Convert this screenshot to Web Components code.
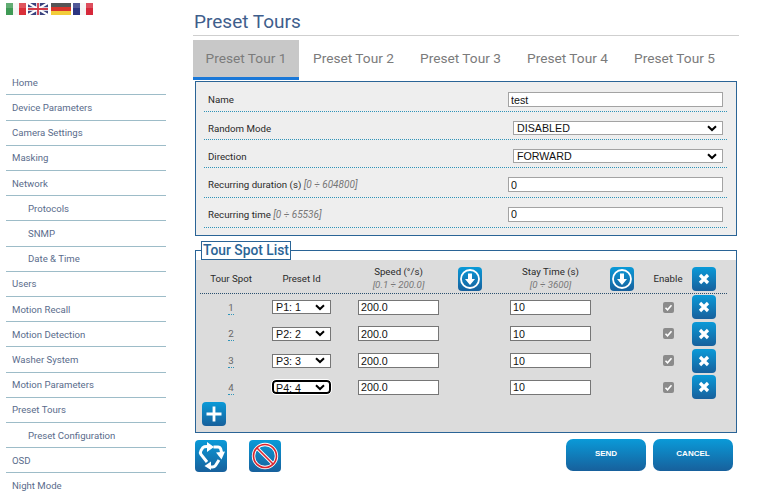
<!DOCTYPE html>
<html lang="en">
<head>
<meta charset="utf-8">
<title>Preset Tours</title>
<style>
  html, body { margin: 0; padding: 0; background: #fff; }
  body { font-family: Roboto, "Liberation Sans", sans-serif; overflow: hidden; }
  .page { display: flex; width: 758px; height: 496px; overflow: hidden; }
</style>
</head>
<body>
<div class="page">
  <side-bar>
    <nav-item>Home</nav-item>
    <nav-item>Device Parameters</nav-item>
    <nav-item>Camera Settings</nav-item>
    <nav-item>Masking</nav-item>
    <nav-item>Network</nav-item>
    <nav-item sub>Protocols</nav-item>
    <nav-item sub>SNMP</nav-item>
    <nav-item sub>Date &amp; Time</nav-item>
    <nav-item>Users</nav-item>
    <nav-item>Motion Recall</nav-item>
    <nav-item>Motion Detection</nav-item>
    <nav-item>Washer System</nav-item>
    <nav-item>Motion Parameters</nav-item>
    <nav-item>Preset Tours</nav-item>
    <nav-item sub>Preset Configuration</nav-item>
    <nav-item>OSD</nav-item>
    <nav-item last>Night Mode</nav-item>
  </side-bar>
  <main-area heading="Preset Tours">
    <tab-bar>
      <tab-item active>Preset Tour 1</tab-item>
      <tab-item>Preset Tour 2</tab-item>
      <tab-item>Preset Tour 3</tab-item>
      <tab-item>Preset Tour 4</tab-item>
      <tab-item>Preset Tour 5</tab-item>
    </tab-bar>
    <form-panel>
      <form-row h="30" pad="6" label="Name"><text-box value="test" w="215"></text-box></form-row>
      <form-row h="28" pad="5" label="Random Mode"><pick-box w="210" options="DISABLED,ENABLED"></pick-box></form-row>
      <form-row h="28" pad="5" label="Direction"><pick-box w="210" options="FORWARD,BACKWARD"></pick-box></form-row>
      <form-row h="30" pad="4" label="Recurring duration (s)" hint="[0 ÷ 604800]"><text-box value="0" w="215"></text-box></form-row>
      <form-row h="30" pad="3" label="Recurring time" hint="[0 ÷ 65536]"><text-box value="0" w="215"></text-box></form-row>
    </form-panel>
    <tour-table>
      <tour-row num="1" preset="P1: 1"></tour-row>
      <tour-row num="2" preset="P2: 2"></tour-row>
      <tour-row num="3" preset="P3: 3"></tour-row>
      <tour-row num="4" preset="P4: 4" focused></tour-row>
    </tour-table>
    <action-bar></action-bar>
  </main-area>
</div>

<script>
const ICONS = {
  down: `<circle cx="12" cy="12" r="9" fill="none" stroke="#fff" stroke-width="1.8"/>
         <path d="M10 6.5h4v5.5h3l-5 6-5-6h3z" fill="#fff"/>`,
  close: `<path d="M8 8l8 8M16 8l-8 8" stroke="#fff" stroke-width="3.2" fill="none"/>`,
  plus: `<path d="M12 4.5v15M4.5 12h15" stroke="#fff" stroke-width="2.8" fill="none"/>`,
  cycle: `<g fill="none" stroke="#fff" stroke-width="3">
            <path d="M12 22L6 14.5Q4.8 12.5 6 10.5L8 7.5Q9 6.5 12 6.5"/>
            <path d="M18.5 7H23Q25 7 25.7 9L26.6 12.5"/>
            <path d="M24 20L20.5 25.5Q19.5 27 17.5 27H15"/>
          </g>
          <path d="M12 2l7 5-7 5zM21 12.5l9-1-3.5 8zM16 21.5l-6.5 4.5 6.5 4z" fill="#fff"/>`,
  forbid: `<circle cx="16" cy="16" r="11.5" fill="none" stroke="#fff" stroke-width="3.4"/>
           <path d="M8 8l16 16" stroke="#fff" stroke-width="3.4"/>
           <circle cx="16" cy="16" r="11.5" fill="none" stroke="#d8252f" stroke-width="1.6"/>
           <path d="M8 8l16 16" stroke="#d8252f" stroke-width="1.6"/>`
};

const CHEVRON = "url(\"data:image/svg+xml,%3Csvg xmlns='http://www.w3.org/2000/svg' width='10' height='7'%3E%3Cpath d='M1 1.2l4 3.8 4-3.8' fill='none' stroke='%23000' stroke-width='2'/%3E%3C/svg%3E\")";
const TICK = "url(\"data:image/svg+xml,%3Csvg xmlns='http://www.w3.org/2000/svg' width='11' height='11'%3E%3Cpath d='M2.5 5.8l2 2 4-4.6' fill='none' stroke='%23fff' stroke-width='1.6'/%3E%3C/svg%3E\")";

class SideBar extends HTMLElement {
  constructor() {
    super();
    this.attachShadow({ mode: 'open' });
  }
  connectedCallback() {
    this.shadowRoot.innerHTML = `
      <style>
        :host { display: block; width: 193px; flex: none; padding-left: 6px; box-sizing: border-box; }
        .flags { display: flex; gap: 2px; height: 12px; margin-top: 3px; }
        .flags svg { width: 20px; height: 12px; display: block; }
        nav { margin-top: 55.3px; width: 160px; }
      </style>
      <div class="flags">
        <svg viewBox="0 0 20 12" role="img" aria-label="Italiano"><rect width="7" height="12" fill="#3f9a55"/><rect x="7" width="6" height="12" fill="#f4f4f4"/><rect x="13" width="7" height="12" fill="#d9303a"/><rect width="20" height="5" fill="#fff" opacity=".18"/></svg>
        <svg viewBox="0 0 20 12" role="img" aria-label="English"><rect width="20" height="12" fill="#39427e"/><path d="M0 0l20 12M20 0L0 12" stroke="#fff" stroke-width="2.2"/><path d="M10 0v12M0 6h20" stroke="#fff" stroke-width="3.6"/><path d="M10 0v12M0 6h20" stroke="#d23a48" stroke-width="1.8"/></svg>
        <svg viewBox="0 0 20 12" role="img" aria-label="Deutsch" style="margin-left:1px"><rect width="20" height="4" fill="#555"/><rect y="4" width="20" height="4" fill="#d8352c"/><rect y="8" width="20" height="4" fill="#f2cd3a"/></svg>
        <svg viewBox="0 0 20 12" role="img" aria-label="Français"><rect width="7" height="12" fill="#2c3580"/><rect x="7" width="6" height="12" fill="#f4f4f4"/><rect x="13" width="7" height="12" fill="#d6283a"/><rect width="20" height="5" fill="#fff" opacity=".18"/></svg>
      </div>
      <nav><slot></slot></nav>`;
  }
}
customElements.define('side-bar', SideBar);

class NavItem extends HTMLElement {
  constructor() {
    super();
    this.attachShadow({ mode: 'open' });
    this.shadowRoot.innerHTML = `
      <style>
        :host { display: flex; align-items: center; box-sizing: border-box; height: 25.19px; padding-left: 6px;
                border-bottom: 1px solid #9dbcc8; font-size: 9.6px; color: #5a6c8c; white-space: nowrap; }
        :host([sub]) { padding-left: 22px; }
        :host([last]) { border-bottom: 0; }
      </style>
      <slot></slot>`;
  }
}
customElements.define('nav-item', NavItem);

class MainArea extends HTMLElement {
  constructor() {
    super();
    this.attachShadow({ mode: 'open' });
  }
  connectedCallback() {
    this.shadowRoot.innerHTML = `
      <style>
        :host { display: block; width: 546px; flex: none; }
        h1 { margin: 0; height: 36px; box-sizing: border-box; border-bottom: 1px solid #cfcfcf; padding: 10px 0 0 1px;
             font-size: 19px; font-weight: 400; line-height: 24px; color: #3f5e8c; }
      </style>
      <h1>${this.getAttribute('heading')}</h1>
      <slot></slot>`;
  }
}
customElements.define('main-area', MainArea);

class TabBar extends HTMLElement {
  constructor() {
    super();
    this.attachShadow({ mode: 'open' });
    this.shadowRoot.innerHTML = `
      <style>
        :host { display: flex; margin-top: 4px; height: 40px; }
      </style>
      <slot></slot>`;
  }
}
customElements.define('tab-bar', TabBar);

class TabItem extends HTMLElement {
  constructor() {
    super();
    this.attachShadow({ mode: 'open' });
    this.shadowRoot.innerHTML = `
      <style>
        :host { display: flex; align-items: center; justify-content: center; box-sizing: border-box; width: 107px;
                height: 40px; padding-bottom: 5px; font-size: 13.7px; color: #7b7b7b; white-space: nowrap; }
        :host([active]) { width: 106px; margin-right: 1px; background: #c8c8c8; border-bottom: 3px solid #1a78d8; padding-bottom: 2px; }
      </style>
      <slot></slot>`;
  }
}
customElements.define('tab-item', TabItem);

class FormPanel extends HTMLElement {
  constructor() {
    super();
    this.attachShadow({ mode: 'open' });
    this.shadowRoot.innerHTML = `
      <style>
        :host { display: block; margin: 1px 2px 0; box-sizing: border-box; height: 155px; padding: 0 9px 0 8px;
                background: #eeeeee; border: 1px solid #2a6496; }
      </style>
      <slot></slot>`;
  }
}
customElements.define('form-panel', FormPanel);

class FormRow extends HTMLElement {
  constructor() {
    super();
    this.attachShadow({ mode: 'open' });
  }
  connectedCallback() {
    const hint = this.getAttribute('hint');
    this.shadowRoot.innerHTML = `
      <style>
        :host { display: flex; align-items: center; justify-content: space-between; box-sizing: border-box;
                height: ${this.getAttribute('h')}px; padding: ${this.getAttribute('pad')}px 4px 0 4px; border-bottom: 1px dotted #2f93b8;
                font-size: 9.7px; color: #2a2a2a; }
        i { color: #777; font-size: 10px; }
      </style>
      <span>${this.getAttribute('label')}${hint ? ` <i>${hint}</i>` : ''}</span>
      <slot></slot>`;
  }
}
customElements.define('form-row', FormRow);

class TextBox extends HTMLElement {
  constructor() {
    super();
    this.attachShadow({ mode: 'open' });
  }
  connectedCallback() {
    const w = this.getAttribute('w');
    this.shadowRoot.innerHTML = `
      <style>
        :host { display: block; }
        input { display: block; box-sizing: border-box; width: ${w}px; height: 15px; margin: 0; padding: 0 1px 0 2px;
                border: 1px solid var(--field-line, #a3a3a3); background: #fff; color: #111; outline: 0;
                font: 10.7px "Liberation Sans", sans-serif; }
      </style>
      <input type="text" value="${this.getAttribute('value')}">`;
  }
}
customElements.define('text-box', TextBox);

class PickBox extends HTMLElement {
  constructor() {
    super();
    this.attachShadow({ mode: 'open' });
  }
  connectedCallback() {
    const w = this.getAttribute('w');
    const opts = this.getAttribute('options').split(',');
    const focused = this.hasAttribute('focused');
    this.shadowRoot.innerHTML = `
      <style>
        :host { display: block; }
        select { display: block; box-sizing: border-box; width: ${w}px; height: 14px; margin: 0; padding: 0 0 0 3px;
                 border: 1px solid var(--field-line, #a3a3a3); border-radius: 0; background: #fff ${CHEVRON} no-repeat right 5px center;
                 appearance: none; color: #111; font: 10.7px/12px "Liberation Sans", sans-serif; outline: 0; }
        select.on { border: 2px solid #000; border-radius: 4px; outline: 1px solid #fff; padding-left: 2px; background-position: right 4px center; }
      </style>
      <select class="${focused ? 'on' : ''}">${opts.map(o => `<option>${o}</option>`).join('')}</select>`;
  }
}
customElements.define('pick-box', PickBox);

class IconBtn extends HTMLElement {
  constructor() {
    super();
    this.attachShadow({ mode: 'open' });
  }
  connectedCallback() {
    const size = this.getAttribute('size') || 24;
    this.shadowRoot.innerHTML = `
      <style>
        :host { display: block; width: ${size}px; height: ${size}px; }
        button { display: block; width: 100%; height: 100%; margin: 0; padding: 0; border: 0; border-radius: 4px;
                 background: linear-gradient(#0a9ad8, #17609c); }
        svg { display: block; width: 100%; height: 100%; }
      </style>
      <button aria-label="${this.getAttribute('icon')}"><svg viewBox="0 0 ${size} ${size}">${ICONS[this.getAttribute('icon')]}</svg></button>`;
  }
}
customElements.define('icon-btn', IconBtn);

class TourTable extends HTMLElement {
  constructor() {
    super();
    this.attachShadow({ mode: 'open' });
    this.shadowRoot.innerHTML = `
      <style>
        :host { display: block; margin: 5px 2px 0; --tour-cols: 62px 96px 100px 52px 100px 43px 30px 45px; --field-line: #767676; }
        fieldset { margin: 0; padding: 0 9px 0 4px; height: 192px; box-sizing: border-box; min-inline-size: 0;
                   background: linear-gradient(#fff 9px, #dcdcdc 9px); border: 1px solid #2a6496; }
        legend { margin-left: 1px; padding: 0 1px; box-sizing: border-box; height: 19px; line-height: 17px; background: #fff;
                 border: 1px solid #2a6496; color: #2a6496; font-size: 13.8px; font-weight: 500; white-space: nowrap; }
        .head { display: grid; grid-template-columns: var(--tour-cols); align-items: center; height: 34px; box-sizing: border-box;
                padding-top: 5px; border-bottom: 1px dotted #2a4f6e; font-size: 9.7px; color: #2a2a2a; text-align: center; }
        .head span { line-height: 13px; padding-bottom: 4px; }
        .head i { color: #777; }
        .head .preset { padding-left: 10px; width: 59px; box-sizing: content-box; }
        .head .speed { margin-right: 2px; width: 81px; }
        .head .stay { width: 81px; }
        .head .enable { white-space: nowrap; display: flex; justify-content: center; }
        .head icon-btn { margin-bottom: 2px; }
        .head .x { margin-left: 9px; }
        .add { margin: 1px 0 0 2px; }
      </style>
      <fieldset>
        <legend>Tour Spot List</legend>
        <div class="head">
          <span>Tour Spot</span>
          <span class="preset">Preset Id</span>
          <span class="speed">Speed (°/s)<br><i>[0.1 ÷ 200.0]</i></span>
          <icon-btn icon="down"></icon-btn>
          <span class="stay">Stay Time (s)<br><i>[0 ÷ 3600]</i></span>
          <icon-btn icon="down"></icon-btn>
          <span class="enable">Enable</span>
          <icon-btn class="x" icon="close"></icon-btn>
        </div>
        <slot></slot>
        <icon-btn class="add" icon="plus"></icon-btn>
      </fieldset>`;
  }
}
customElements.define('tour-table', TourTable);

class TourRow extends HTMLElement {
  constructor() {
    super();
    this.attachShadow({ mode: 'open' });
  }
  connectedCallback() {
    const n = this.getAttribute('num');
    const p = this.getAttribute('preset');
    const focused = this.hasAttribute('focused') ? 'focused' : '';
    this.shadowRoot.innerHTML = `
      <style>
        :host { display: grid; grid-template-columns: var(--tour-cols); align-items: center; height: 26.67px; }
        .num { justify-self: center; font-size: 9.7px; color: #666; line-height: 12px; padding-top: 2px; border-bottom: 1px dotted #2f93b8; }
        pick-box { margin-left: 10px; }
        .check { justify-self: center; width: 11px; height: 11px; margin: 0; appearance: none; border-radius: 2px;
                 background: #8b8b8b ${TICK} no-repeat center; }
        icon-btn { margin-left: 9px; }
      </style>
      <span class="num">${n}</span>
      <pick-box w="59" options="${p}" ${focused}></pick-box>
      <text-box w="81" value="200.0"></text-box>
      <span></span>
      <text-box w="81" value="10"></text-box>
      <span></span>
      <input class="check" type="checkbox" checked disabled aria-label="Enable">
      <icon-btn icon="close"></icon-btn>`;
  }
}
customElements.define('tour-row', TourRow);

class ActionBar extends HTMLElement {
  constructor() {
    super();
    this.attachShadow({ mode: 'open' });
    this.shadowRoot.innerHTML = `
      <style>
        :host { display: flex; align-items: flex-start; margin: 6px 6px 0 2px; }
        icon-btn { margin: 1px 22px 0 0; }
        .send { margin-left: auto; }
        button { width: 80px; height: 32px; margin: 0 0 0 7px; padding: 0 0 3px; border: 0; border-radius: 7px;
                 background: linear-gradient(#0a9ad8, #17609c); color: #fff; font: bold 8px "Liberation Sans", sans-serif; }
      </style>
      <icon-btn icon="cycle" size="32"></icon-btn>
      <icon-btn icon="forbid" size="32"></icon-btn>
      <button class="send">SEND</button>
      <button>CANCEL</button>`;
  }
}
customElements.define('action-bar', ActionBar);
</script>
</body>
</html>
